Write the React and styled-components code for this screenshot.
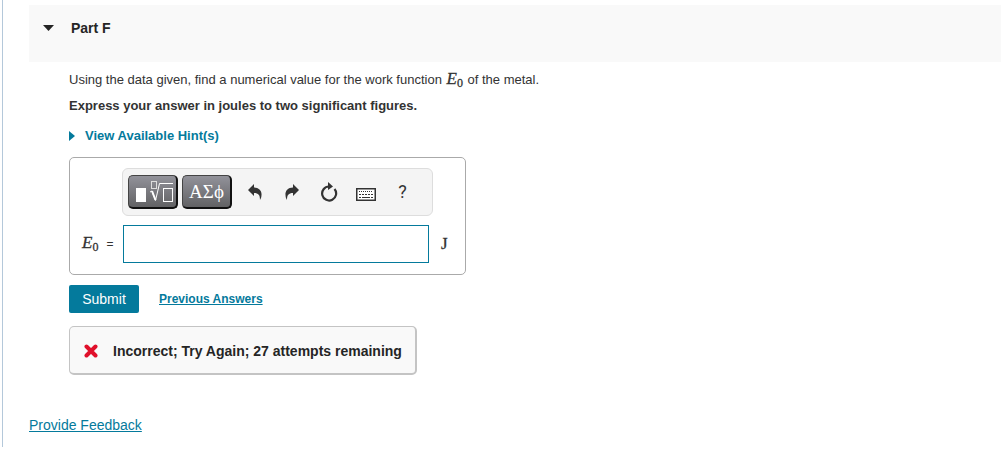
import React, { useState } from 'react';
import styled, { createGlobalStyle } from 'styled-components';

const GlobalStyle = createGlobalStyle`
  * {
    box-sizing: border-box;
  }

  body {
    margin: 0;
    background: #fff;
    color: #333;
    font-family: "Liberation Sans", Arial, sans-serif;
    font-size: 13px;
    line-height: 20px;
  }

  button,
  input {
    font-family: inherit;
  }
`;

const Page = styled.main`
  margin-left: 2px;
  padding: 5px 0 11px 26px;
  border-left: 1px solid #b4c8da;
`;

const PartHeader = styled.header`
  padding: 13px 14px 24px;
  background: #f9f9f9;
`;

const PartTitle = styled.h2`
  margin: 0;
  font-size: 14px;
  line-height: 20px;
`;

const PartToggle = styled.button`
  display: flex;
  align-items: center;
  gap: 17px;
  padding: 0;
  border: none;
  background: none;
  color: #252525;
  font-size: 14px;
  font-weight: bold;
  line-height: 20px;
  cursor: pointer;
`;

const PartBody = styled.section`
  display: flex;
  flex-direction: column;
  align-items: flex-start;
  padding: 8px 20px 0 40px;
`;

const Question = styled.p`
  margin: 0 0 6px;
`;

const Instructions = styled(Question)`
  margin-bottom: 10px;
  font-weight: bold;
`;

const HintButton = styled.button`
  display: flex;
  align-items: center;
  gap: 10px;
  margin-bottom: 11px;
  padding: 0;
  border: none;
  background: none;
  color: #047a9c;
  font-size: 13px;
  font-weight: bold;
  line-height: 20px;
  cursor: pointer;
`;

const MathText = styled.span`
  margin: 0 1px;
  font-family: "Liberation Serif", "Times New Roman", serif;
  font-size: 17px;
  line-height: 16px;
  -webkit-text-stroke: 0.3px currentColor;

  sub {
    font-size: 12px;
    line-height: 0;
    vertical-align: -3px;
  }
`;

const AnswerBox = styled.form`
  display: grid;
  grid-template-columns: 41px minmax(0, 311px) auto;
  align-items: center;
  row-gap: 9px;
  max-width: 100%;
  padding: 10px 16px 11px 11px;
  border: 1px solid #aaa;
  border-radius: 5px;
`;

const Toolbar = styled.div`
  grid-column: 2;
  display: flex;
  align-items: center;
  gap: 4px;
  height: 48px;
  padding: 0 5px;
  border: 1px solid #ddd;
  border-radius: 6px;
  background: #f4f4f4;
`;

const PaletteButton = styled.button`
  display: flex;
  align-items: center;
  justify-content: center;
  width: 50px;
  height: 34px;
  padding: 0;
  border: 1px solid #111;
  border-top-color: #444;
  border-left-color: #444;
  border-bottom-width: 2px;
  border-right-width: 2px;
  border-radius: 5px;
  background: linear-gradient(#92929a, #626264);
  color: #fff;
  cursor: pointer;
`;

const Greek = styled.span`
  font-family: "Liberation Serif", "Times New Roman", serif;
  font-size: 19px;
  line-height: 24px;
`;

const ToolGroup = styled.div`
  display: flex;
  flex: 1;
`;

const ToolButton = styled.button`
  display: flex;
  align-items: center;
  justify-content: center;
  width: 37px;
  height: 34px;
  padding: 0;
  border: none;
  background: none;
  color: #333;
  font-family: Roboto, sans-serif;
  font-size: 18px;
  line-height: 24px;
  cursor: pointer;
`;

const AnswerLabel = styled.label`
  grid-column: 1;
  white-space: nowrap;
`;

const Equals = styled.span`
  margin-left: 7px;
  font-size: 12px;
`;

const AnswerInput = styled.input`
  width: calc(100% - 5px);
  height: 38px;
  margin-left: 1px;
  padding: 0 8px;
  border: 1px solid #047a9c;
  border-radius: 0;
  background: #fff;
  font-size: 16px;
  outline: none;
`;

const Unit = styled(MathText)`
  padding-left: 7px;
`;

const Actions = styled.div`
  display: flex;
  align-items: center;
  gap: 20px;
  margin: 10px 0 13px;
`;

const SubmitButton = styled.button`
  width: 70px;
  height: 28px;
  padding: 0;
  border: none;
  border-radius: 2px;
  background: #047a9c;
  color: #fff;
  font-size: 14px;
  cursor: pointer;
`;

const Link = styled.a`
  color: #047a9c;
  font-size: ${(props) => (props.$small ? '12px' : '14px')};
  font-weight: ${(props) => (props.$small ? 'bold' : 'normal')};
  text-decoration: underline;
`;

const Feedback = styled.div`
  display: flex;
  align-items: center;
  gap: 15px;
  padding: 14px 13px 12px 14px;
  border: 1px solid #c4c4c4;
  border-right-width: 2px;
  border-bottom-width: 2px;
  border-radius: 5px;
  background: #f9f9f9;
  color: #252525;
  font-size: 14px;
  font-weight: bold;
`;

const Footer = styled.footer`
  padding-top: 40px;
`;

const DownArrow = () => (
  <svg width="11" height="6" viewBox="0 0 11 6" aria-hidden="true">
    <path d="M0 0H11L5.5 6Z" fill="#252525" />
  </svg>
);

const RightArrow = () => (
  <svg width="6" height="10" viewBox="0 0 6 10" aria-hidden="true">
    <path d="M0 0L6 5L0 10Z" fill="#047a9c" />
  </svg>
);

const TemplateIcon = () => (
  <svg width="41" height="25" viewBox="0 0 41 25" fill="none" stroke="#fff" aria-hidden="true">
    <rect x="4" y="9" width="10" height="14" fill="#fff" stroke="none" />
    <rect x="19.5" y="2.5" width="5" height="7" stroke="#ddd" />
    <path d="M18 13L20 12L23.5 21.5L27.5 4.5H41" />
    <path d="M20 12L23.5 21" strokeWidth="2" />
    <rect x="31.5" y="9.5" width="9" height="13" />
  </svg>
);

const UndoIcon = () => (
  <svg width="14" height="16" viewBox="0 0 14 16" fill="#333" aria-hidden="true">
    <path d="M0 6L6 0V3.5C11 3.5 14 7 13.5 11C13.4 13 13 14.5 12 16C12 11 10.5 9 6 9V12Z" />
  </svg>
);

const RedoIcon = () => (
  <svg width="14" height="16" viewBox="0 0 14 16" fill="#333" aria-hidden="true">
    <path d="M14 6L8 0V3.5C3 3.5 0 7 .5 11C.6 13 1 14.5 2 16C2 11 3.5 9 8 9V12Z" />
  </svg>
);

const ResetIcon = () => (
  <svg width="18" height="20" viewBox="0 0 18 20" fill="none" aria-hidden="true">
    <path d="M9 4.5A7 7 0 1 0 14.5 7" stroke="#333" strokeWidth="2.2" />
    <path d="M8 0L13 4.5L8 8Z" fill="#333" />
  </svg>
);

const KeyboardIcon = () => (
  <svg width="20" height="18" viewBox="0 0 20 18" fill="none" stroke="#333" aria-hidden="true">
    <rect x="0.75" y="5.75" width="18.5" height="11.5" strokeWidth="1.5" fill="#fff" />
    <path d="M3 8.5H17" strokeDasharray="1 1" />
    <path d="M3 11.5H17" strokeDasharray="2 1" />
    <path d="M3 14.5H5M6 14.5H14M15 14.5H17" />
  </svg>
);

const CrossIcon = () => (
  <svg width="14" height="14" viewBox="0 0 14 14" fill="none" aria-hidden="true">
    <path d="M2.5 2.5L11.5 11.5M11.5 2.5L2.5 11.5" stroke="#e0102b" strokeWidth="4" strokeLinecap="round" />
  </svg>
);

const WorkFunction = () => (
  <MathText>
    <i>E</i>
    <sub>0</sub>
  </MathText>
);

const App = () => {
  const [answer, setAnswer] = useState('');
  const [open, setOpen] = useState(true);

  return (
    <>
      <GlobalStyle />
      <Page>
        <PartHeader>
          <PartTitle>
            <PartToggle type="button" aria-expanded={open} onClick={() => setOpen(!open)}>
              <DownArrow />
              Part F
            </PartToggle>
          </PartTitle>
        </PartHeader>
        {open && (
          <PartBody>
            <Question>
              Using the data given, find a numerical value for the work function <WorkFunction /> of the metal.
            </Question>
            <Instructions>Express your answer in joules to two significant figures.</Instructions>
            <HintButton type="button">
              <RightArrow />
              View Available Hint(s)
            </HintButton>
            <AnswerBox id="answer-form" onSubmit={(e) => e.preventDefault()}>
              <Toolbar role="toolbar" aria-label="Equation tools">
                <PaletteButton type="button" aria-label="Templates">
                  <TemplateIcon />
                </PaletteButton>
                <PaletteButton type="button" aria-label="Symbols">
                  <Greek>ΑΣϕ</Greek>
                </PaletteButton>
                <ToolGroup>
                  <ToolButton type="button" aria-label="Undo">
                    <UndoIcon />
                  </ToolButton>
                  <ToolButton type="button" aria-label="Redo">
                    <RedoIcon />
                  </ToolButton>
                  <ToolButton type="button" aria-label="Reset" onClick={() => setAnswer('')}>
                    <ResetIcon />
                  </ToolButton>
                  <ToolButton type="button" aria-label="Keyboard shortcuts">
                    <KeyboardIcon />
                  </ToolButton>
                  <ToolButton type="button" aria-label="Help">
                    ?
                  </ToolButton>
                </ToolGroup>
              </Toolbar>
              <AnswerLabel htmlFor="answer">
                <WorkFunction />
                <Equals>=</Equals>
              </AnswerLabel>
              <AnswerInput id="answer" value={answer} onChange={(e) => setAnswer(e.target.value)} />
              <Unit>J</Unit>
            </AnswerBox>
            <Actions>
              <SubmitButton type="submit" form="answer-form">
                Submit
              </SubmitButton>
              <Link href="#previous" $small>
                Previous Answers
              </Link>
            </Actions>
            <Feedback role="status">
              <CrossIcon />
              Incorrect; Try Again; 27 attempts remaining
            </Feedback>
          </PartBody>
        )}
        <Footer>
          <Link href="#feedback">Provide Feedback</Link>
        </Footer>
      </Page>
    </>
  );
};

export default App;
